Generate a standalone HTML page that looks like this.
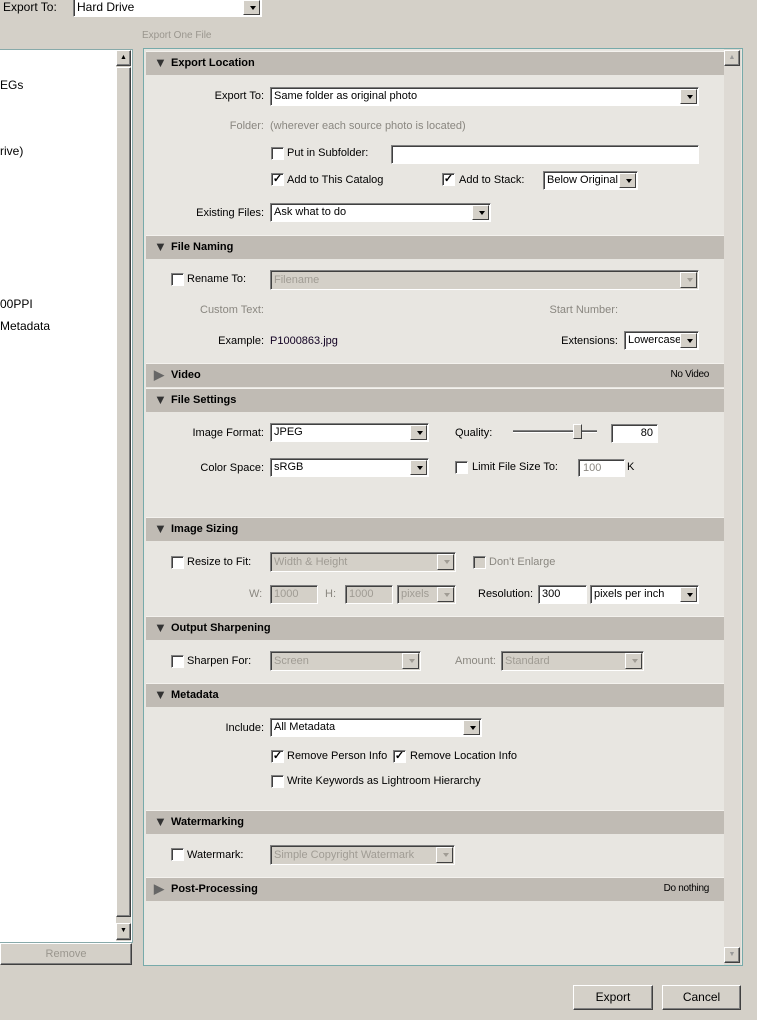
<!DOCTYPE html>
<html><head><meta charset="utf-8"><style>
*{box-sizing:border-box;margin:0;padding:0}
body{width:757px;height:1020px;background:#d4d0c8;font-family:"Liberation Sans",sans-serif;font-size:11px;color:#000;position:relative;overflow:hidden}
.a{position:absolute;white-space:nowrap;line-height:14px}
.r{text-align:right}
.g{color:#8a8780}
.hd{position:absolute;left:146px;width:578px;height:24px;background:#c0bbb4;border-top:1px solid #f4f2ee;font-weight:bold;line-height:22px;padding-left:25px}
.hd .t{position:absolute;left:8px;top:0;font-size:13px;color:#333}
.hd .s{position:absolute;right:15px;top:0;font-weight:normal;font-size:10px;letter-spacing:-.3px}
.sel,.fld{position:absolute;background:#fff;border:1px solid;border-color:#808080 #fff #fff #808080;box-shadow:inset 1px 1px 0 #404040;line-height:17px;padding-left:3px;overflow:hidden}
.dis{background:#d4d0c8;color:#a09c94}
.sel::after{content:"";position:absolute;right:1px;top:1px;bottom:1px;width:15px;background:#d4d0c8;border:1px solid;border-color:#fff #404040 #404040 #fff}
.sel b{position:absolute;right:5px;top:50%;margin-top:-2px;width:0;height:0;border-left:3px solid transparent;border-right:3px solid transparent;border-top:4px solid #000;z-index:2}
.dis b{border-top-color:#a09c94}
.fld{padding-left:0;padding-right:4px}
.cb{position:absolute;width:13px;height:13px;background:#fff;border:1px solid;border-color:#808080 #fff #fff #808080;box-shadow:inset 1px 1px 0 #404040;font-size:11px;line-height:10px;text-align:center;font-weight:bold}
.btn{position:absolute;background:#d4d0c8;border:1px solid;border-color:#fff #404040 #404040 #fff;box-shadow:inset -1px -1px 0 #808080;text-align:center;font-size:12px}
</style></head><body>
<div class="a" style="left:3px;top:0;font-size:12px">Export To:</div>
<div class="sel" style="left:73px;top:-2px;width:189px;height:19px;font-size:12px">Hard Drive<b></b></div>
<div class="a g" style="left:142px;top:29px;font-size:10px;color:#9a968e">Export One File</div>

<div style="position:absolute;left:0;top:49px;width:133px;height:894px;background:#fff;border:1px solid #8aa;border-left:none"></div>
<div class="a" style="left:0;top:78px;font-size:12px">EGs</div>
<div class="a" style="left:0;top:144px;font-size:12px">rive)</div>
<div class="a" style="left:0;top:297px;font-size:12px">00PPI</div>
<div class="a" style="left:0;top:319px;font-size:12px">Metadata</div>
<div style="position:absolute;left:116px;top:50px;width:15px;height:891px;background:#d4d0c8"></div>
<div class="btn" style="left:116px;top:50px;width:15px;height:16px;font-size:7px;line-height:13px">▲</div>
<div class="btn" style="left:116px;top:67px;width:15px;height:850px"></div>
<div class="btn" style="left:116px;top:923px;width:15px;height:17px;font-size:7px;line-height:14px">▼</div>
<div class="btn" style="left:0;top:943px;width:132px;height:22px;color:#9a968e;font-size:11px;line-height:20px">Remove</div>

<div style="position:absolute;left:143px;top:48px;width:600px;height:918px;background:#e8e6e1;border:1px solid #7aa"></div>
<div style="position:absolute;left:724px;top:49px;width:17px;height:916px;background:#dedad4"></div>
<div class="btn" style="left:724px;top:50px;width:16px;height:16px;font-size:7px;line-height:13px;color:#999">▲</div>
<div class="btn" style="left:724px;top:947px;width:16px;height:16px;font-size:7px;line-height:13px;color:#999">▼</div>

<div class="hd" style="top:51px"><span class="t">▼</span>Export Location</div>
<div class="a r" style="left:150px;width:114px;top:89px">Export To:</div>
<div class="sel" style="left:270px;top:87px;width:429px;height:19px">Same folder as original photo<b></b></div>
<div class="a r g" style="left:150px;width:114px;top:119px">Folder:</div>
<div class="a g" style="left:270px;top:119px">(wherever each source photo is located)</div>
<div class="cb" style="left:271px;top:147px"></div><div class="a" style="left:287px;top:146px">Put in Subfolder:</div>
<div class="fld" style="left:391px;top:145px;width:308px;height:19px"></div>
<div class="cb" style="left:271px;top:173px">✓</div><div class="a" style="left:287px;top:173px">Add to This Catalog</div>
<div class="cb" style="left:442px;top:173px">✓</div><div class="a" style="left:459px;top:173px">Add to Stack:</div>
<div class="sel" style="left:543px;top:171px;width:95px;height:19px">Below Original<b></b></div>
<div class="a r" style="left:150px;width:114px;top:206px">Existing Files:</div>
<div class="sel" style="left:270px;top:203px;width:221px;height:19px">Ask what to do<b></b></div>

<div class="hd" style="top:235px"><span class="t">▼</span>File Naming</div>
<div class="cb" style="left:171px;top:273px"></div><div class="a" style="left:187px;top:272px">Rename To:</div>
<div class="sel dis" style="left:270px;top:270px;width:429px;height:20px;line-height:18px">Filename<b></b></div>
<div class="a r g" style="left:150px;width:114px;top:303px">Custom Text:</div>
<div class="a r g" style="left:500px;width:118px;top:303px">Start Number:</div>
<div class="a r" style="left:150px;width:114px;top:334px">Example:</div>
<div class="a" style="left:270px;top:334px;color:#102">P1000863.jpg</div>
<div class="a r" style="left:500px;width:118px;top:334px">Extensions:</div>
<div class="sel" style="left:624px;top:331px;width:75px;height:19px">Lowercase<b></b></div>

<div class="hd" style="top:363px"><span class="t" style="color:#666">▶</span>Video<span class="s">No Video</span></div>
<div class="hd" style="top:388px"><span class="t">▼</span>File Settings</div>
<div class="a r" style="left:150px;width:114px;top:426px">Image Format:</div>
<div class="sel" style="left:270px;top:423px;width:159px;height:19px">JPEG<b></b></div>
<div class="a" style="left:455px;top:426px">Quality:</div>
<div style="position:absolute;left:513px;top:430px;width:84px;height:3px;border-top:1px solid #808080;border-bottom:1px solid #fff;background:#555"></div>
<div style="position:absolute;left:573px;top:424px;width:9px;height:15px;background:#d4d0c8;border:1px solid;border-color:#fff #404040 #404040 #fff"></div>
<div class="fld r" style="left:611px;top:424px;width:47px;height:19px">80</div>
<div class="a r" style="left:150px;width:114px;top:461px">Color Space:</div>
<div class="sel" style="left:270px;top:458px;width:159px;height:19px">sRGB<b></b></div>
<div class="cb" style="left:455px;top:461px"></div><div class="a" style="left:472px;top:460px">Limit File Size To:</div>
<div class="fld g" style="left:578px;top:459px;width:47px;height:18px;padding-left:4px">100</div>
<div class="a" style="left:627px;top:460px">K</div>

<div class="hd" style="top:517px"><span class="t">▼</span>Image Sizing</div>
<div class="cb" style="left:171px;top:556px"></div><div class="a" style="left:187px;top:555px">Resize to Fit:</div>
<div class="sel dis" style="left:270px;top:552px;width:186px;height:20px;line-height:18px">Width &amp; Height<b></b></div>
<div class="cb" style="left:473px;top:556px;background:#d4d0c8"></div><div class="a g" style="left:489px;top:555px">Don't Enlarge</div>
<div class="a g" style="left:249px;top:587px">W:</div>
<div class="fld dis" style="left:270px;top:585px;width:48px;height:19px;padding-left:3px">1000</div>
<div class="a g" style="left:325px;top:587px">H:</div>
<div class="fld dis" style="left:345px;top:585px;width:48px;height:19px;padding-left:3px">1000</div>
<div class="sel dis" style="left:397px;top:585px;width:59px;height:19px">pixels<b></b></div>
<div class="a" style="left:478px;top:587px">Resolution:</div>
<div class="fld" style="left:538px;top:585px;width:49px;height:19px;padding-left:3px">300</div>
<div class="sel" style="left:590px;top:585px;width:109px;height:19px">pixels per inch<b></b></div>

<div class="hd" style="top:616px"><span class="t">▼</span>Output Sharpening</div>
<div class="cb" style="left:171px;top:655px"></div><div class="a" style="left:187px;top:654px">Sharpen For:</div>
<div class="sel dis" style="left:270px;top:651px;width:151px;height:20px;line-height:18px">Screen<b></b></div>
<div class="a g" style="left:455px;top:654px">Amount:</div>
<div class="sel dis" style="left:501px;top:651px;width:143px;height:20px;line-height:18px">Standard<b></b></div>

<div class="hd" style="top:683px"><span class="t">▼</span>Metadata</div>
<div class="a r" style="left:150px;width:114px;top:721px">Include:</div>
<div class="sel" style="left:270px;top:718px;width:212px;height:19px">All Metadata<b></b></div>
<div class="cb" style="left:271px;top:750px">✓</div><div class="a" style="left:287px;top:749px">Remove Person Info</div>
<div class="cb" style="left:393px;top:750px">✓</div><div class="a" style="left:410px;top:749px">Remove Location Info</div>
<div class="cb" style="left:271px;top:775px"></div><div class="a" style="left:287px;top:774px">Write Keywords as Lightroom Hierarchy</div>

<div class="hd" style="top:810px"><span class="t">▼</span>Watermarking</div>
<div class="cb" style="left:171px;top:848px"></div><div class="a" style="left:187px;top:848px">Watermark:</div>
<div class="sel dis" style="left:270px;top:845px;width:185px;height:20px;line-height:18px">Simple Copyright Watermark<b></b></div>

<div class="hd" style="top:877px"><span class="t" style="color:#666">▶</span>Post-Processing<span class="s">Do nothing</span></div>

<div class="btn" style="left:573px;top:985px;width:80px;height:25px;line-height:23px">Export</div>
<div class="btn" style="left:662px;top:985px;width:79px;height:25px;line-height:23px">Cancel</div>
</body></html>
